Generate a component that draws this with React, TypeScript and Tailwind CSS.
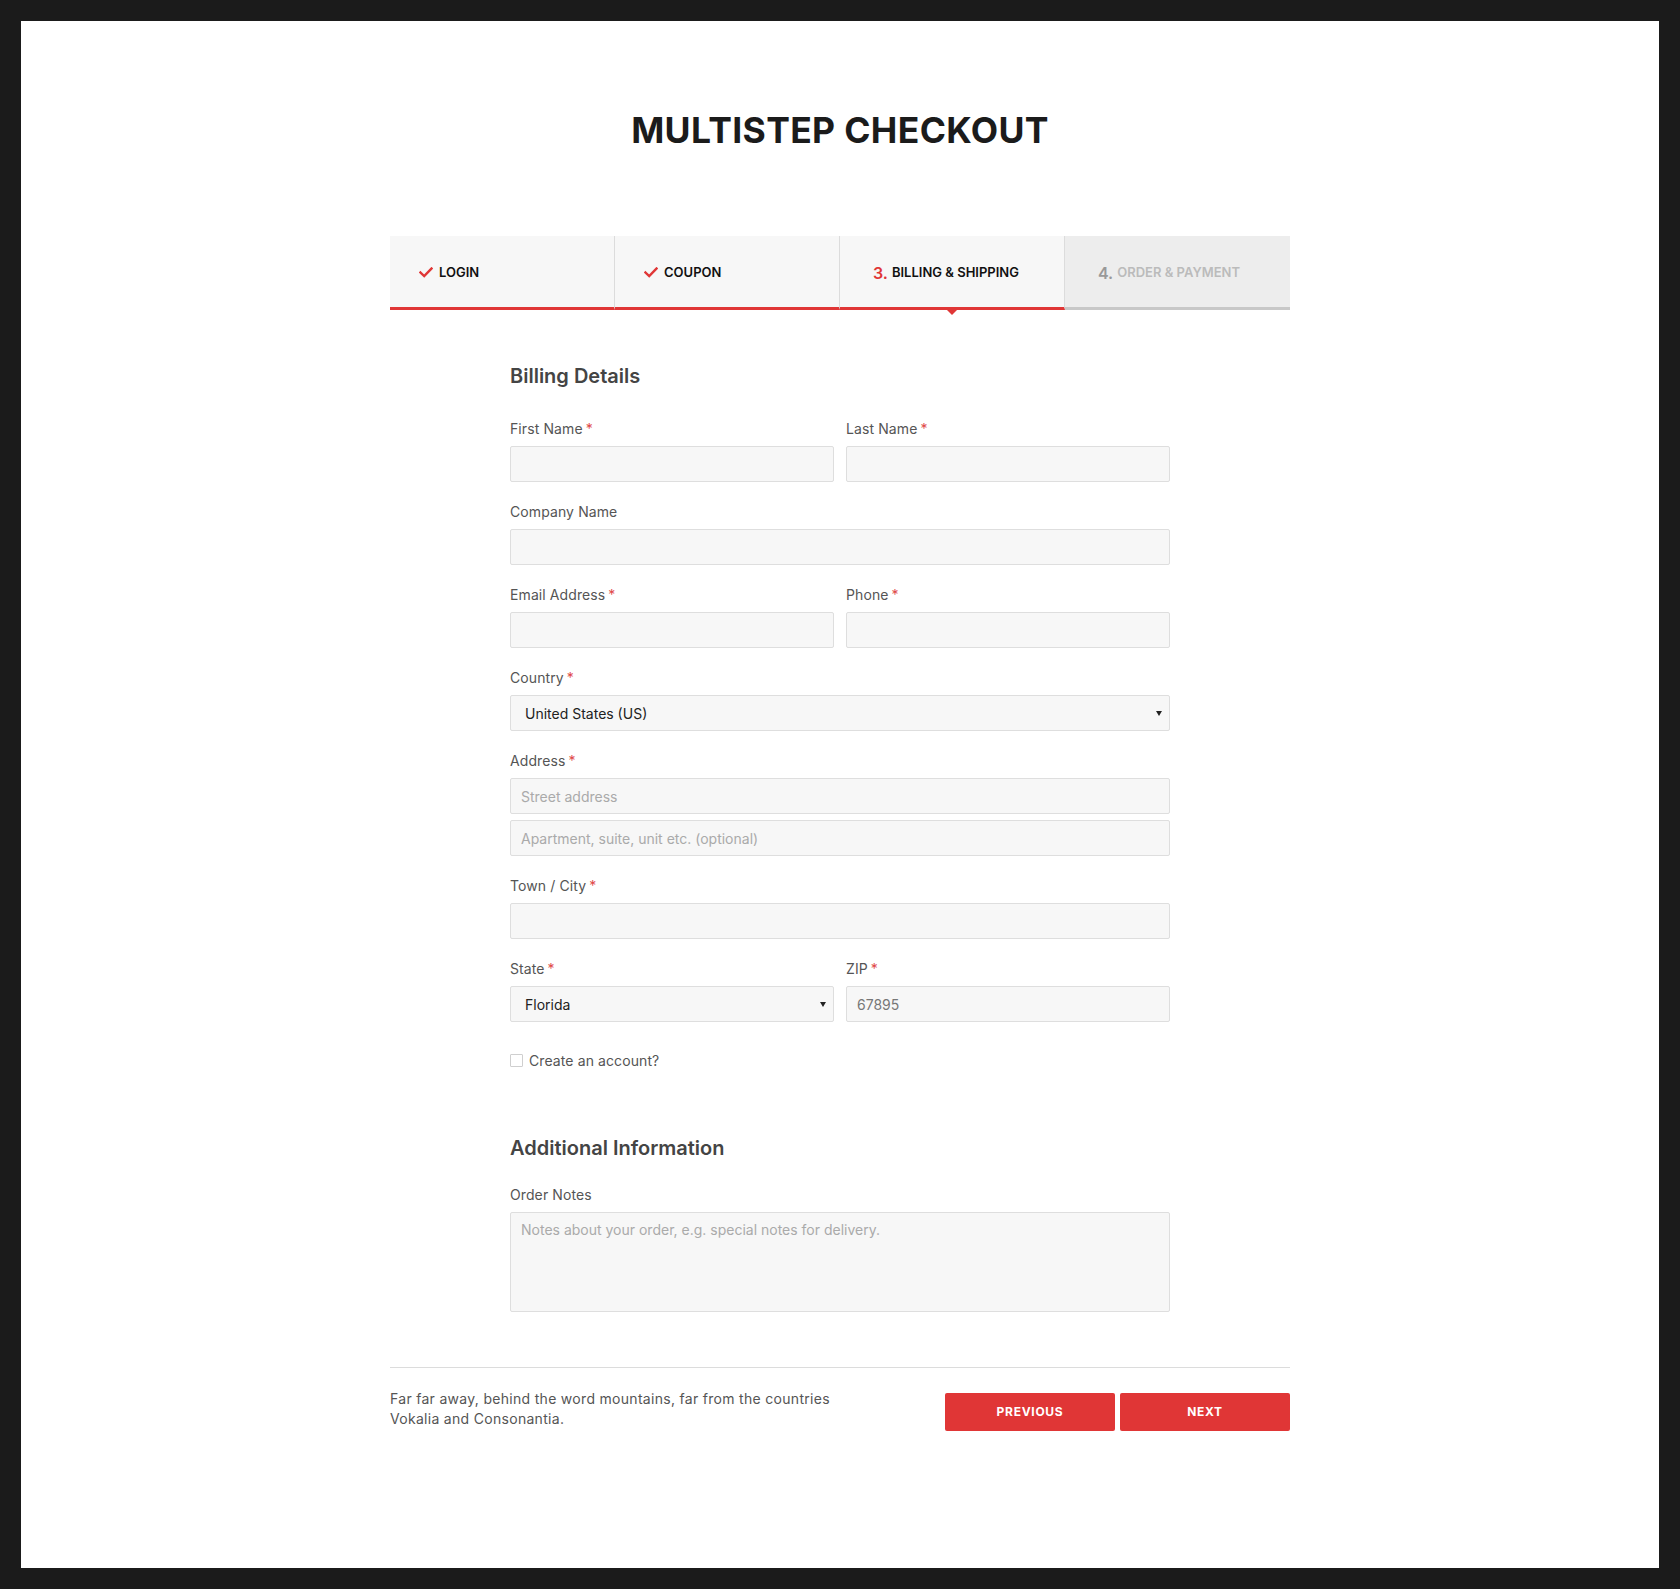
import React from "react";

const font = { fontFamily: 'Inter, "Noto Sans", sans-serif' };

function Check() {
  return (
    <svg width="14" height="11" viewBox="0 0 14 11" className="shrink-0">
      <polyline points="1.5,5.5 5.2,9 12.5,1.5" fill="none" stroke="#e03636" strokeWidth="2.4" strokeLinecap="square" />
    </svg>
  );
}

function Label({ text, req = false }: { text: string; req?: boolean }) {
  return (
    <div className="text-[14px] leading-[22px] text-[#555] mb-[6px] tracking-[0.1px]">
      {text}
      {req && <span className="text-[#e04848] ml-[3px]">*</span>}
    </div>
  );
}

function Input({ placeholder = "", value }: { placeholder?: string; value?: string }) {
  return (
    <input
      placeholder={placeholder}
      defaultValue={value}
      className="block w-full h-[36px] bg-[#f7f7f7] border border-[#dedede] rounded-[2px] px-[10px] text-[14px] text-[#777] placeholder:text-[#aaa] outline-none"
      style={font}
    />
  );
}

function Select({ value }: { value: string }) {
  return (
    <div className="flex items-center justify-between w-full h-[36px] bg-[#f7f7f7] border border-[#dedede] rounded-[2px] pl-[14px] pr-[7px] text-[14px] text-[#222]">
      <span>{value}</span>
      <svg width="6" height="6" viewBox="0 0 6 6">
        <polygon points="0,1 6,1 3,6" fill="#222" />
      </svg>
    </div>
  );
}

function Field({ label, req, children, className = "" }: { label: string; req?: boolean; children: React.ReactNode; className?: string }) {
  return (
    <div className={"mb-[19px] " + className}>
      <Label text={label} req={req} />
      {children}
    </div>
  );
}

export default function App() {
  return (
    <div className="bg-[#1b1b1b] p-[21px] min-h-[1589px]" style={font}>
      <div className="bg-white h-[1547px] pt-[88px]">
        <h1 className="text-center text-[35.5px] leading-[43px] font-bold text-[#1b1b1b] tracking-[0.01em]">
          MULTISTEP CHECKOUT
        </h1>

        <div className="w-[900px] mx-auto mt-[84px]">
          {/* Tabs */}
          <div className="grid grid-cols-4">
            <div className="h-[74px] pt-[2px] bg-[#f7f7f7] border-b-[3px] border-[#e03636] border-r border-r-[#dcdcdc] flex items-center pl-[29px] gap-[6px]">
              <Check />
              <span className="text-[13px] font-semibold text-[#111]">LOGIN</span>
            </div>
            <div className="h-[74px] pt-[2px] bg-[#f7f7f7] border-b-[3px] border-[#e03636] border-r border-r-[#dcdcdc] flex items-center pl-[29px] gap-[6px]">
              <Check />
              <span className="text-[13px] font-semibold text-[#111]">COUPON</span>
            </div>
            <div className="relative h-[74px] pt-[2px] bg-[#f7f7f7] border-b-[3px] border-[#e03636] border-r border-r-[#dcdcdc] flex items-center pl-[33px] gap-[4px]">
              <span className="text-[16px] font-semibold text-[#e03636]">3.</span>
              <span className="text-[13px] font-semibold text-[#111]">BILLING &amp; SHIPPING</span>
              <div className="absolute left-1/2 -translate-x-1/2 -bottom-[8px] w-0 h-0 border-l-[5px] border-r-[5px] border-t-[5px] border-l-transparent border-r-transparent border-t-[#e03636]" />
            </div>
            <div className="h-[74px] pt-[2px] bg-[#ededed] border-b-[3px] border-[#c8c8c8] flex items-center pl-[33px] gap-[4px]">
              <span className="text-[16px] font-semibold text-[#999]">4.</span>
              <span className="text-[13px] font-semibold text-[#bbb]">ORDER &amp; PAYMENT</span>
            </div>
          </div>

          {/* Form */}
          <div className="w-[660px] mx-auto mt-[52px]">
            <h2 className="text-[20px] leading-[28px] font-semibold text-[#444]">Billing Details</h2>
            <div className="mt-[28px]">
              <div className="grid grid-cols-2 gap-x-[12px]">
                <Field label="First Name" req>
                  <Input />
                </Field>
                <Field label="Last Name" req>
                  <Input />
                </Field>
              </div>
              <Field label="Company Name">
                <Input />
              </Field>
              <div className="grid grid-cols-2 gap-x-[12px]">
                <Field label="Email Address" req>
                  <Input />
                </Field>
                <Field label="Phone" req>
                  <Input />
                </Field>
              </div>
              <Field label="Country" req>
                <Select value="United States (US)" />
              </Field>
              <Field label="Address" req>
                <Input placeholder="Street address" />
                <div className="mt-[6px]">
                  <Input placeholder="Apartment, suite, unit etc. (optional)" />
                </div>
              </Field>
              <Field label="Town / City" req>
                <Input />
              </Field>
              <div className="grid grid-cols-2 gap-x-[12px]">
                <Field label="State" req>
                  <Select value="Florida" />
                </Field>
                <Field label="ZIP" req>
                  <Input value="67895" />
                </Field>
              </div>
              <label className="flex items-center gap-[6px] mt-[8px] h-[22px] text-[14px] text-[#555] tracking-[0.1px]">
                <span className="w-[13px] h-[13px] border border-[#cfcfcf] bg-white rounded-[1px]" />
                Create an account?
              </label>
            </div>

            <h2 className="mt-[63px] text-[20px] leading-[28px] font-semibold text-[#444]">Additional Information</h2>
            <div className="mt-[22px]">
              <Label text="Order Notes" />
              <textarea
                placeholder="Notes about your order, e.g. special notes for delivery."
                className="block w-full h-[100px] bg-[#f7f7f7] border border-[#dedede] rounded-[2px] px-[10px] py-[6px] text-[14px] text-[#777] placeholder:text-[#aaa] outline-none resize-none"
                style={font}
              />
            </div>
          </div>

          <div className="mt-[55px] border-t border-[#dcdcdc]" />
          <div className="flex items-start justify-between pt-[21px]">
            <p className="text-[14px] leading-[20px] text-[#555] tracking-[0.3px]">
              Far far away, behind the word mountains, far from the countries
              <br />
              Vokalia and Consonantia.
            </p>
            <div className="flex gap-[5px] mt-[4px]">
              <button className="w-[170px] h-[38px] bg-[#e03636] rounded-[2px] text-white text-[12px] font-bold tracking-[0.06em]">
                PREVIOUS
              </button>
              <button className="w-[170px] h-[38px] bg-[#e03636] rounded-[2px] text-white text-[12px] font-bold tracking-[0.06em]">
                NEXT
              </button>
            </div>
          </div>
        </div>
      </div>
    </div>
  );
}
